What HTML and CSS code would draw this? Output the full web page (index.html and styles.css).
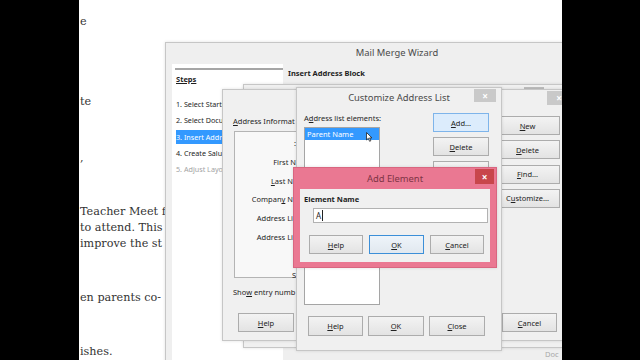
FILE: index.html
```html
<!DOCTYPE html>
<html>
<head>
<meta charset="utf-8">
<link rel="stylesheet" href="styles.css">
</head>
<body>
<div class="screen">
  <div class="bar"></div>
  <div class="stage">
    <div class="doc">
      <div class="ln">e</div>
      <div class="ln gap64">te</div>
      <div class="ln gap40">,</div>
      <div class="ln gap38">Teacher Meet f</div>
      <div class="ln">to attend. This</div>
      <div class="ln">improve the st</div>
      <div class="ln gap38">en parents co-</div>
      <div class="ln gap38">ishes.</div>
    </div>

    <div class="win mmw">
      <div class="titlebar">Mail Merge Wizard</div>
      <div class="mmw-body">
        <div class="steps">
          <div class="steps-rule"></div>
          <div class="steps-head">Steps</div>
          <div class="steps-list">
            <div class="step">1. Select Starti</div>
            <div class="step">2. Select Docu</div>
            <div class="step"><span class="step-sel">3. Insert Addr</span></div>
            <div class="step">4. Create Salut</div>
            <div class="step step-off">5. Adjust Layo</div>
          </div>
        </div>
        <div class="mmw-pane">
          <div class="pane-head">Insert Address Block</div>
          <div class="pane-doc">Doc</div>
        </div>
      </div>
    </div>

    <div class="win back">
      <div class="back-bar"></div>
    </div>

    <div class="win addr">
      <div class="titlebar short"><span class="xbtn xgray addr-x">×</span></div>
      <div class="addr-main">
        <div class="addr-left">
          <div class="txt"><u>A</u>ddress Informat</div>
          <div class="addr-box">
            <div class="frow frow-c"><span class="flbl">:</span></div>
            <div class="frow frow-c"><span class="flbl">First N</span></div>
            <div class="frow"><span class="flbl"><u>L</u>ast N</span></div>
            <div class="frow"><span class="flbl">Compan<u>y</u> N</span></div>
            <div class="frow"><span class="flbl">Address Li</span></div>
            <div class="frow"><span class="flbl">Address Li</span></div>
            <div class="frow"><span class="flbl"></span></div>
            <div class="frow frow-c"><span class="flbl">S</span></div>
          </div>
          <div class="txt show">Sho<u>w</u> entry numb</div>
        </div>
        <div class="addr-right">
          <div class="btn w65"><u>N</u>ew</div>
          <div class="btn w65"><u>D</u>elete</div>
          <div class="btn w65"><u>F</u>ind...</div>
          <div class="btn w65">C<u>u</u>stomize...</div>
        </div>
      </div>
      <div class="addr-foot">
        <div class="btn w56"><u>H</u>elp</div>
        <div class="btn w55 addr-cancel"><u>C</u>ancel</div>
      </div>
    </div>

    <div class="win cust">
      <div class="titlebar">Customize Address List<span class="xbtn xgray cust-x">×</span></div>
      <div class="cust-body">
        <div class="cust-main">
          <div class="cust-left">
            <div class="txt">A<u>d</u>dress list elements:</div>
            <div class="listbox">
              <div class="list-sel">Parent Name
                <svg class="pointer" width="7" height="10" viewBox="0 0 7 10"><path d="M0.5 0.5 L0.5 8 L2.3 6.3 L3.6 9.3 L4.8 8.8 L3.6 5.9 L6 5.9 Z" fill="#fff" stroke="#222" stroke-width="0.8"/></svg>
              </div>
            </div>
          </div>
          <div class="cust-btns">
            <div class="btn w56 btn-default"><u>A</u>dd...</div>
            <div class="btn w56"><u>D</u>elete</div>
            <div class="btn w56"></div>
          </div>
        </div>
        <div class="cust-foot">
          <div class="btn w55 h20"><u>H</u>elp</div>
          <div class="btn w56 h20"><u>O</u>K</div>
          <div class="btn w56 h20"><u>C</u>lose</div>
        </div>
      </div>
    </div>

    <div class="win add">
      <div class="titlebar add-title">Add Element<span class="xbtn xred add-x">×</span></div>
      <div class="add-body">
        <div class="txt bold">Element Name</div>
        <div class="input"><span class="caret">A</span></div>
        <div class="add-foot">
          <div class="btn w54"><u>H</u>elp</div>
          <div class="btn w55 btn-focus"><u>O</u>K</div>
          <div class="btn w54"><u>C</u>ancel</div>
        </div>
      </div>
    </div>
  </div>
  <div class="bar bar-r"></div>
</div>
</body>
</html>
```

FILE: styles.css
```css
* { box-sizing: border-box; }
html, body { margin: 0; padding: 0; }
body {
  width: 640px; height: 360px; overflow: hidden; background: #000;
  font-family: "Noto Sans", "Open Sans", sans-serif;
}
.screen { display: flex; width: 640px; height: 360px; }
.bar { width: 79px; flex: none; background: #000; }
.bar-r { width: 78px; }
.stage { position: relative; width: 483px; flex: none; background: #fff; overflow: hidden; }

/* document behind */
.doc {
  padding: 14px 0 0 1px;
  font-family: "DejaVu Serif", "Liberation Serif", serif;
  font-size: 11.2px; line-height: 16px; color: #333; white-space: nowrap;
}
.gap64 { margin-top: 64px; }
.gap40 { margin-top: 40px; }
.gap38 { margin-top: 38px; }

/* windows */
.win {
  position: absolute; background: #f0f0f0; border: 1px solid #c6c6c6;
  font-size: 7.5px; color: #1e1e1e; white-space: nowrap;
  box-shadow: 0 0 3px rgba(0,0,0,0.12);
}
.titlebar {
  position: relative; height: 21px; line-height: 19px; text-align: center;
  font-size: 9.4px; color: #4a4a4a;
}
.titlebar.short { height: 19px; }
.xbtn {
  position: absolute; top: 1px; display: flex; align-items: center; justify-content: center;
  color: #fff; font-size: 10px; line-height: 1; font-weight: bold;
}
.xgray { background: #c9c9c9; }
.xred { background: #c8464b; }
.txt { line-height: 10px; }
.bold { font-weight: bold; }
u { text-decoration: underline; text-underline-offset: 1px; }

.btn {
  display: flex; align-items: center; justify-content: center; flex: none;
  height: 19px; border: 1px solid #acacac;
  background: linear-gradient(#f3f3f3, #e3e3e3); color: #222;
}
.w54 { width: 54px; } .w55 { width: 55px; } .w56 { width: 56px; } .w65 { width: 65px; }
.h20 { height: 20px; }
.btn-default { background: #dcecfc; border-color: #7eb4ea; }
.btn-focus { border-color: #3c8fd8; background: linear-gradient(#eef4fa, #e1e8ef); }

/* mail merge wizard */
.mmw { left: 86px; top: 42px; width: 464px; height: 320px; background: #efefef; }
.mmw-body { display: flex; height: 297px; padding-left: 6px; }
.steps { width: 111px; background: #fff; padding-top: 4px; flex: none; }
.steps-rule { margin-left: 3px; height: 2px; background: #a6a6a6; }
.steps-head { margin: 4px 0 0 4px; font-weight: bold; line-height: 10px; text-decoration: underline; text-underline-offset: 1px; }
.steps-list { margin-top: 12px; font-size: 7.2px; }
.step { padding-left: 4px; line-height: 16.25px; }
.step-sel { background: #3399ff; color: #fff; padding: 2px 1px 2px 0; }
.step-off { color: #a3a3a3; }
.mmw-pane { flex: 1; display: flex; flex-direction: column; padding: 4px 0 2px 5px; }
.pane-head { font-weight: bold; line-height: 10px; }
.pane-doc { margin: auto 0 0 257px; line-height: 10px; color: #a8a8a8; }

/* window behind address list */
.back { left: 164px; top: 84px; width: 360px; height: 264px; }
.back-bar { margin: 2px 0 0 280px; width: 20px; height: 2px; background: #bdbdbd; }

/* new address list */
.addr { left: 143px; top: 89px; width: 360px; height: 252px; }
.addr-x { left: 324px; width: 24px; height: 14px; }
.addr-main { display: flex; }
.addr-left { width: 272px; padding: 7px 0 0 10px; flex: none; }
.addr-box {
  margin: 5px 0 0 1px; width: 200px; height: 147px; background: #f8f8f8;
  border: 1px solid #b4b4b4; padding-top: 2px;
}
.frow { height: 18.8px; line-height: 18.8px; display: flex; width: 58px; }
.frow-c { width: 61px; }
.flbl { flex: 1; text-align: right; }
.show { margin-top: 9px; }
.addr-right { padding-top: 7px; display: flex; flex-direction: column; gap: 5.3px; }
.addr-foot { display: flex; margin-top: 16px; padding-left: 15px; }
.addr-cancel { margin-left: 208px; }

/* customize address list */
.cust { left: 217px; top: 87px; width: 206px; height: 264px; }
.cust-x { left: 177px; width: 22px; height: 13px; }
.cust-body { padding: 4px 0 0 7px; }
.cust-main { display: flex; }
.cust-left { width: 129px; flex: none; }
.listbox {
  margin-top: 4px; width: 76px; height: 178px; background: #fff;
  border: 1px solid #a5a5a5;
}
.list-sel {
  position: relative; height: 12px; line-height: 12px; padding-left: 2px;
  background: #3399ff; color: #fff;
}
.pointer { position: absolute; left: 61px; top: 4px; }
.cust-btns { display: flex; flex-direction: column; gap: 5px; }
.cust-foot { display: flex; gap: 5px; margin-top: 11px; padding-left: 4px; }

/* add element */
.add { left: 214px; top: 167px; width: 204px; height: 101px; background: #ea7892; border-color: #d96680; }
.add-title { line-height: 21px; color: #7e3445; }
.add-x { left: 181px; width: 19px; height: 15px; }
.add-body { margin: 0 6px; height: 73px; background: #f0f0f0; padding: 5px 0 0 4px; }
.input {
  margin: 4px 0 0 9px; width: 175px; height: 15px; background: #fff;
  border: 1px solid #b2b2b2; padding-left: 2px; line-height: 13px; font-size: 8px;
}
.caret { border-right: 1px solid #222; padding-right: 1px; }
.add-foot { display: flex; gap: 6px; margin-top: 12px; padding-left: 5px; }
```
